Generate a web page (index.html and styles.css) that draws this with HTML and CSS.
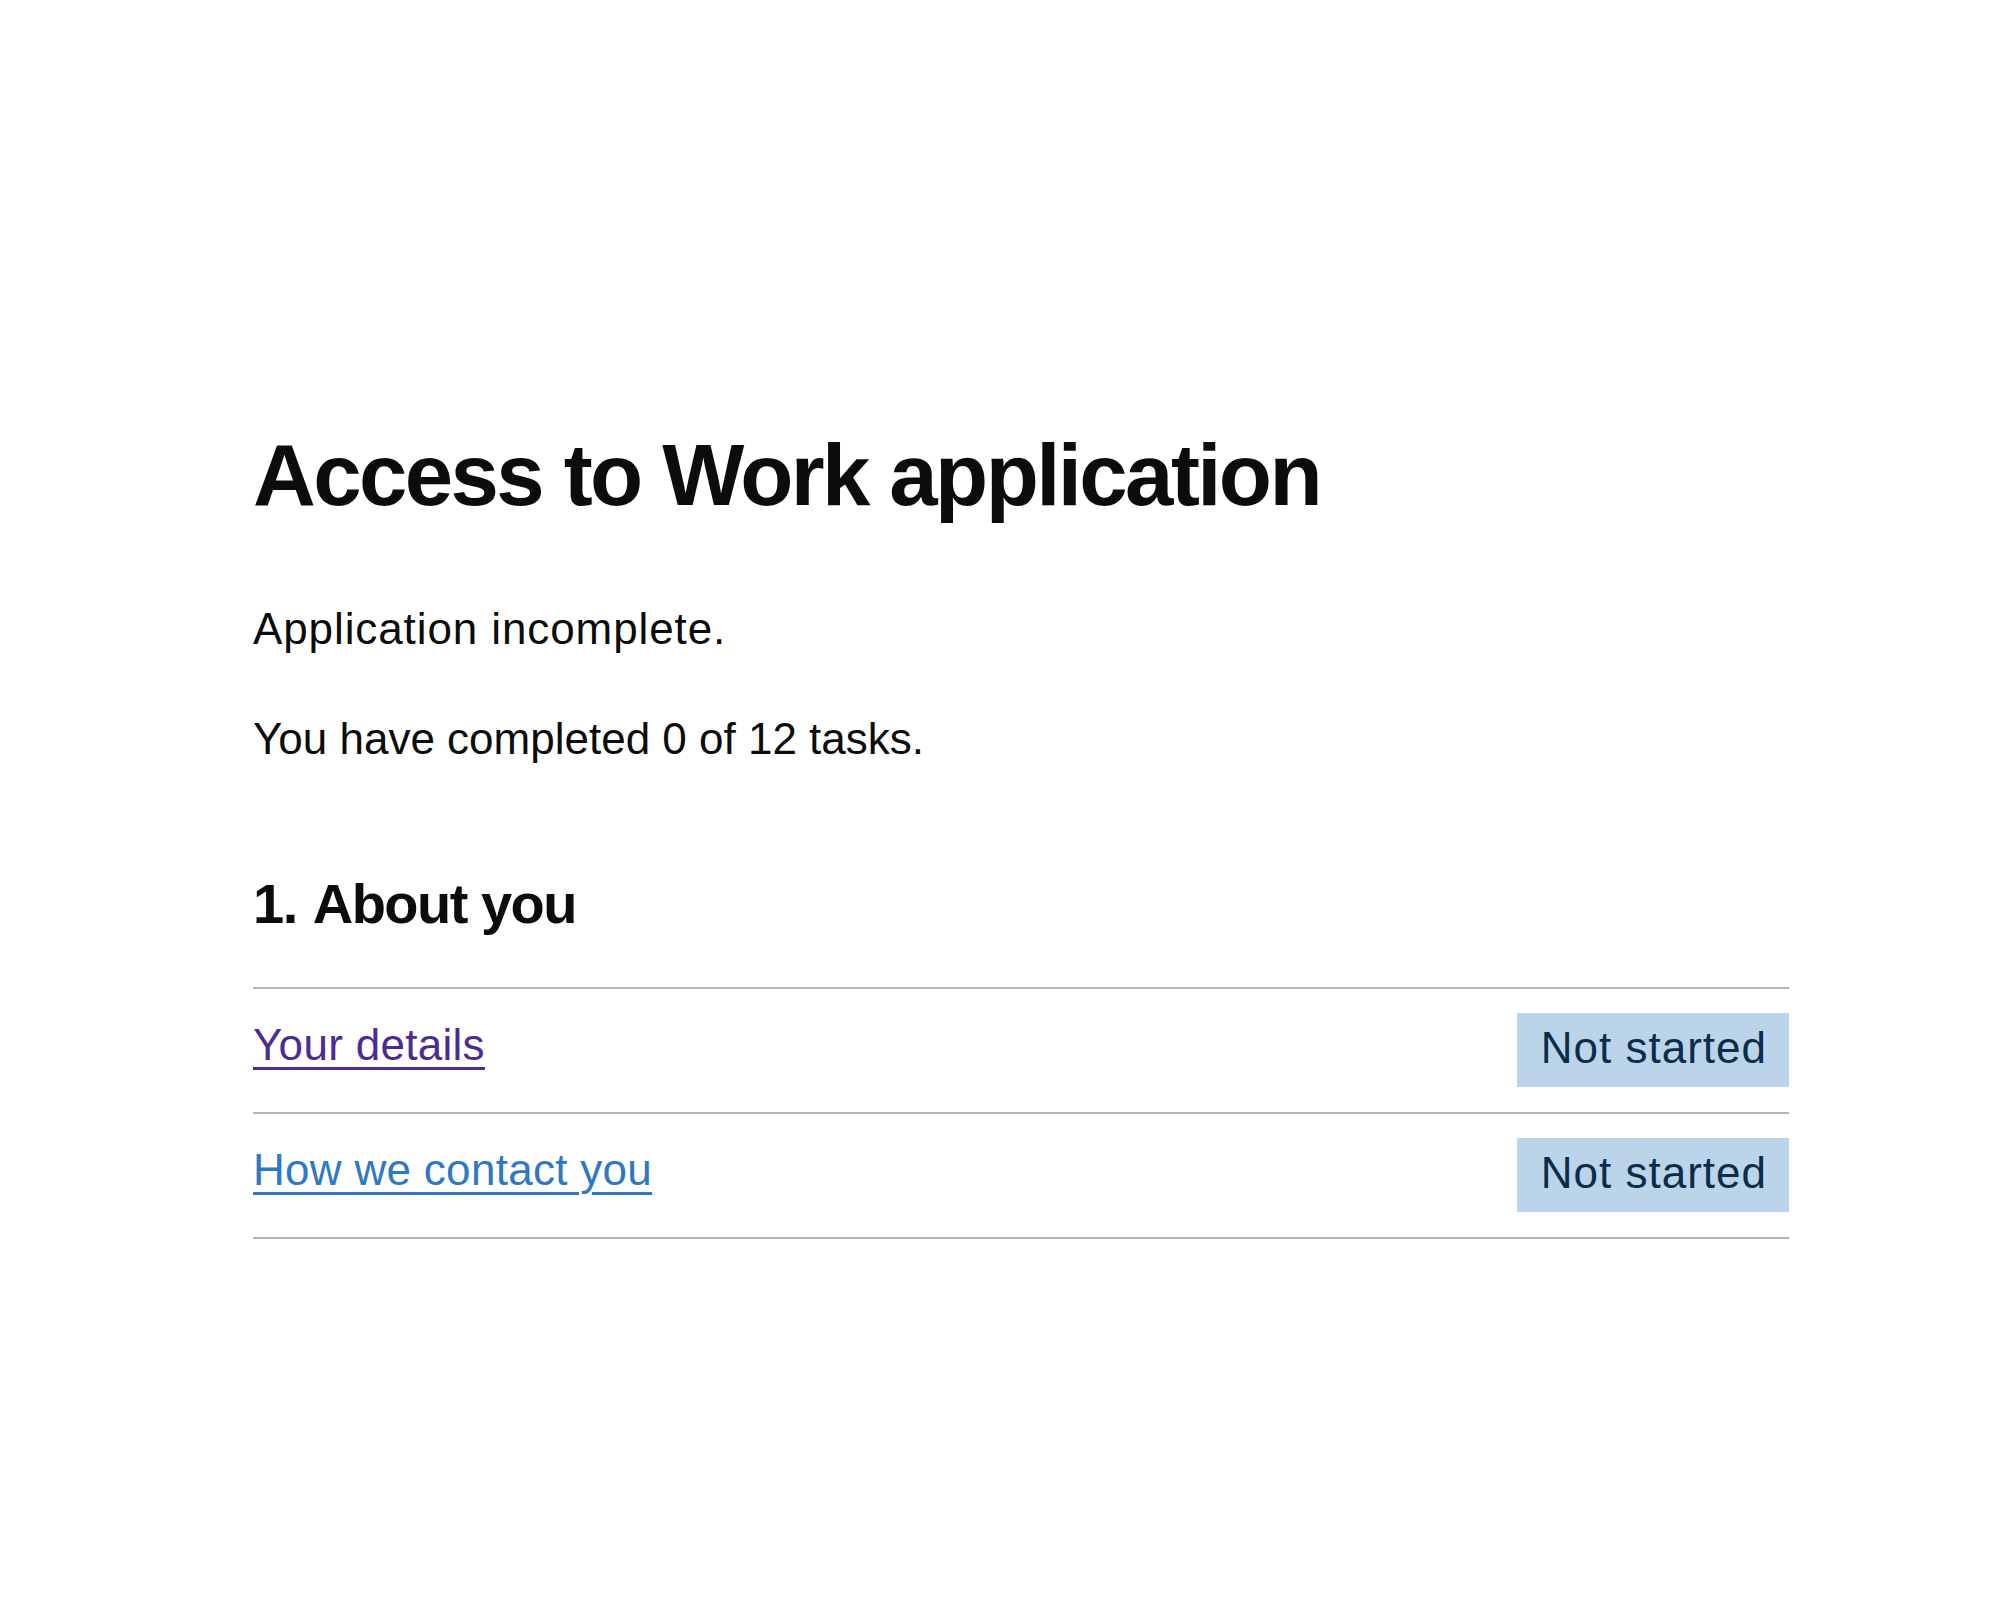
FILE: index.html
```html
<!DOCTYPE html>
<html lang="en">
<head>
<meta charset="utf-8">
<title>Access to Work application</title>
<link rel="stylesheet" href="styles.css">
</head>
<body>
<main class="page">
  <h1 class="title">Access to Work application</h1>
  <p class="body-text status">Application incomplete.</p>
  <p class="body-text progress">You have completed 0 of 12 tasks.</p>
  <h2 class="section-heading"><span class="section-number">1.</span>About you</h2>
  <ul class="task-list">
    <li class="task-row">
      <a class="task-link visited" href="#">Your details</a>
      <strong class="tag">Not started</strong>
    </li>
    <li class="task-row">
      <a class="task-link" href="#">How we contact you</a>
      <strong class="tag">Not started</strong>
    </li>
  </ul>
</main>
</body>
</html>
```
FILE: styles.css
```css
html, body {
  margin: 0;
  padding: 0;
  background: #ffffff;
}

body {
  font-family: "Liberation Sans", Arial, sans-serif;
  color: #0b0c0c;
}

.page {
  width: 1536px;
  padding: 425px 0 0 253px;
}

.title {
  margin: 0;
  font-size: 87px;
  line-height: 100px;
  font-weight: 700;
  letter-spacing: -2.6px;
  color: #0b0c0c;
}

.body-text {
  margin: 0;
  font-size: 44px;
  line-height: 60px;
  color: #0b0c0c;
}

.status {
  margin-top: 74px;
  letter-spacing: 0.9px;
}

.progress {
  margin-top: 50px;
}

.section-heading {
  margin: 100px 0 0;
  font-size: 56px;
  line-height: 70px;
  font-weight: 700;
  letter-spacing: -1.5px;
  color: #0b0c0c;
}

.section-number {
  margin-right: 16px;
}

.task-list {
  list-style: none;
  margin: 48px 0 0;
  padding: 0;
  border-top: 2px solid #b1b4b6;
}

.task-row {
  display: flex;
  justify-content: space-between;
  align-items: flex-start;
  padding: 24px 0 25px;
  border-bottom: 2px solid #b1b4b6;
}

.task-link {
  font-size: 44px;
  line-height: 64px;
  letter-spacing: 0.3px;
  color: #2f78c2;
  text-decoration: underline;
  text-decoration-thickness: 3px;
  text-underline-offset: 7px;
}

.task-link.visited {
  color: #4c2c92;
}

.tag {
  display: block;
  font-weight: 400;
  font-size: 44px;
  line-height: 70px;
  letter-spacing: 1px;
  padding: 0 22px 4px 24px;
  background: #bbd4ea;
  color: #0c2d4a;
}
```
